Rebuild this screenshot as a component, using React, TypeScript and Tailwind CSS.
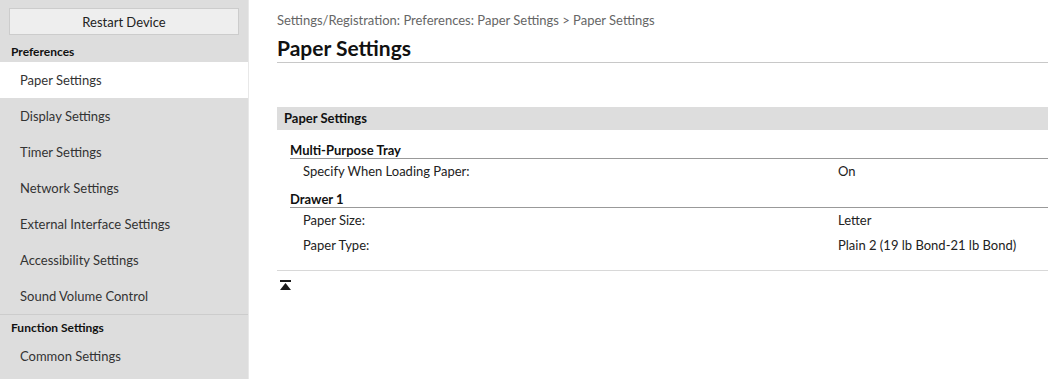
import React from "react";

const items = [
  "Paper Settings",
  "Display Settings",
  "Timer Settings",
  "Network Settings",
  "External Interface Settings",
  "Accessibility Settings",
  "Sound Volume Control",
];

function TopIcon() {
  return (
    <svg width="11" height="10" viewBox="0 0 11 10" className="block">
      <rect x="0" y="0" width="11" height="2" fill="#1a1a1a" />
      <polygon points="5.5,3 11,10 0,10" fill="#1a1a1a" />
    </svg>
  );
}

export default function App() {
  const font = { fontFamily: "Lato, 'Noto Sans', sans-serif" };
  return (
    <div className="flex min-h-[379px] w-[1048px] bg-white text-[13px] text-[#222]" style={font}>
      <aside className="flex w-[249px] shrink-0 flex-col border-r border-[#e8e8e8] bg-[#dddddd]">
        <div className="px-[9px] pt-[8px]">
          <button className="flex h-[27px] w-full items-center justify-center border border-[#cccccc] bg-[#eeeeee] pt-[2px] text-[13px] text-[#222]">
            Restart Device
          </button>
        </div>
        <div className="flex h-[27px] items-center pl-[11px] pt-[7px] text-[12px] font-bold text-[#111]">
          Preferences
        </div>
        {items.map((t, i) => (
          <div
            key={t}
            className={
              i === 0
                ? "flex h-[36px] items-center bg-white pl-[20px] pt-[2px] text-[#333]"
                : "flex h-[36px] items-center pl-[20px] pt-[2px] text-[#333]"
            }
          >
            {t}
          </div>
        ))}
        <div className="h-px bg-[#cccccc]" />
        <div className="flex h-[23px] items-center pl-[11px] pt-[2px] text-[12px] font-bold text-[#111]">
          Function Settings
        </div>
        <div className="flex h-[36px] items-center pl-[20px] pt-[2px] text-[#333]">Common Settings</div>
      </aside>
      <main className="flex min-w-0 flex-1 flex-col pl-[28px]">
        <div className="pt-[12px] leading-[16px] text-[#666]">
          Settings/Registration: Preferences: Paper Settings &gt; Paper Settings
        </div>
        <h1 className="h-[35px] border-b border-[#c8c8c8] pt-[8px] text-[21px] font-bold leading-[24px] text-[#111]">
          Paper Settings
        </h1>
        <div className="mt-[44px] flex h-[23px] items-center bg-[#dddddd] pl-[7px] font-bold text-[#111]">
          Paper Settings
        </div>
        <div className="ml-[13px]">
          <div className="border-b border-[#999999] pt-[12px] font-bold leading-[16px] text-[#111]">
            Multi-Purpose Tray
          </div>
          <div className="flex h-[25px] items-center pl-[13px]">
            <span className="w-[535px]">Specify When Loading Paper:</span>
            <span>On</span>
          </div>
          <div className="border-b border-[#999999] pt-[7px] font-bold leading-[16px] text-[#111]">
            Drawer 1
          </div>
          <div className="flex h-[25px] items-center pl-[13px]">
            <span className="w-[535px]">Paper Size:</span>
            <span>Letter</span>
          </div>
          <div className="flex h-[25px] items-center pl-[13px]">
            <span className="w-[535px]">Paper Type:</span>
            <span>Plain 2 (19 lb Bond-21 lb Bond)</span>
          </div>
        </div>
        <div className="mt-[12px] h-px bg-[#d8d8d8]" />
        <div className="ml-[3px] mt-[9px]">
          <TopIcon />
        </div>
      </main>
    </div>
  );
}
